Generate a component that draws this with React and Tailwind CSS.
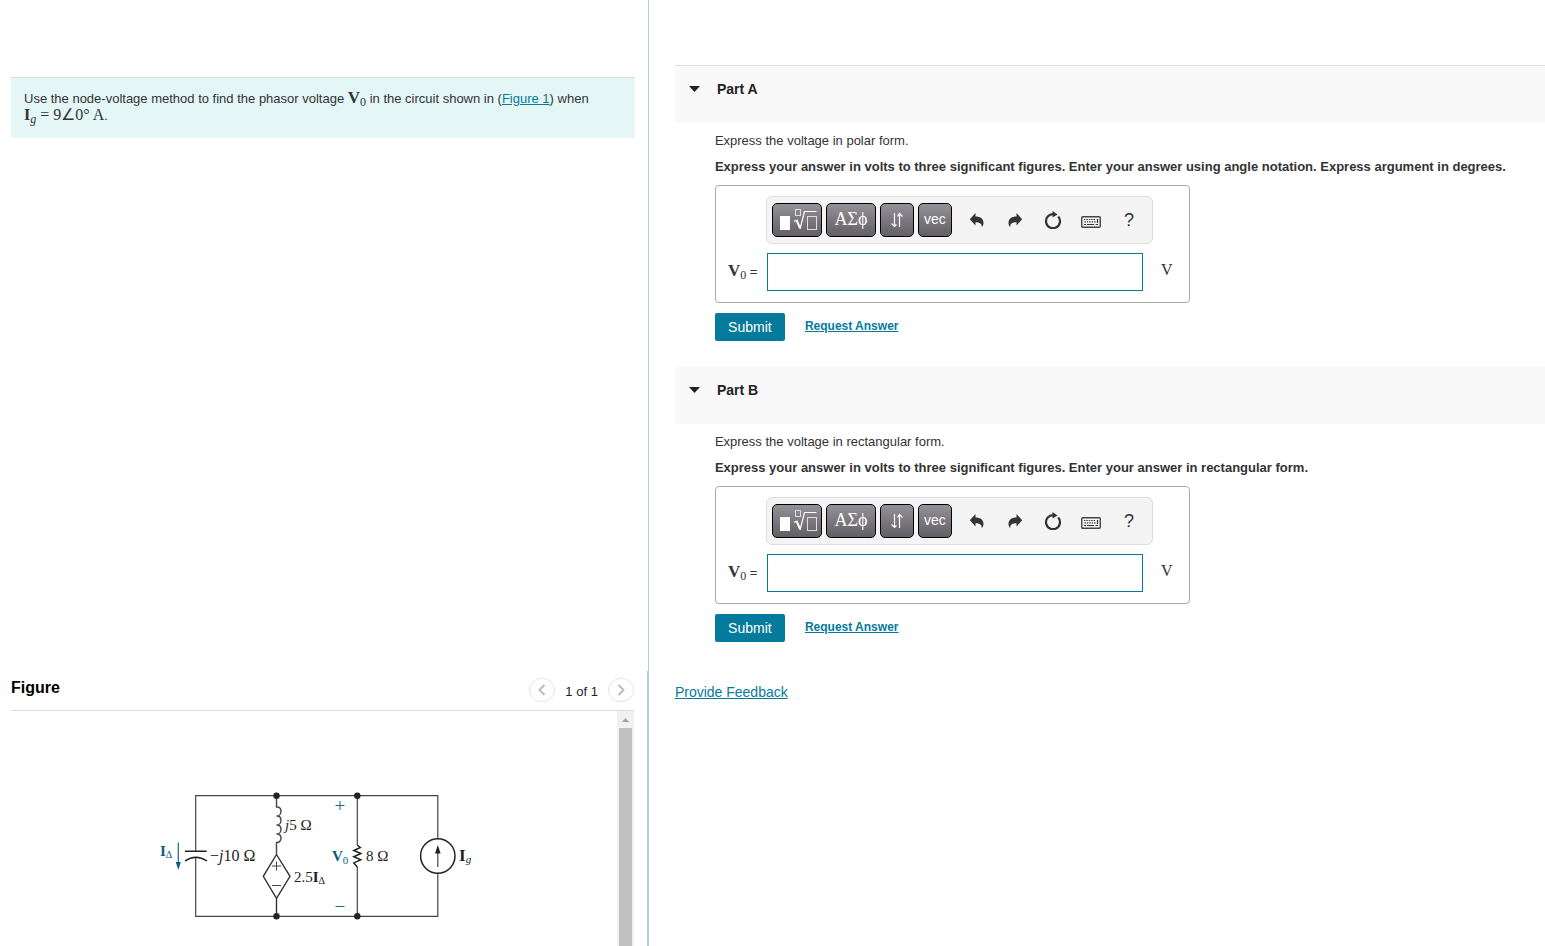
import React from "react";

const parts = [
  {
    id: "a",
    title: "Part A",
    prompt: "Express the voltage in polar form.",
    hint: "Express your answer in volts to three significant figures. Enter your answer using angle notation. Express argument in degrees.",
  },
  {
    id: "b",
    title: "Part B",
    prompt: "Express the voltage in rectangular form.",
    hint: "Express your answer in volts to three significant figures. Enter your answer in rectangular form.",
  },
];

const KEY_CLASS =
  "flex h-[34px] shrink-0 items-center justify-center rounded-[5px] border border-black bg-linear-to-b from-[#949198] to-[#626065] text-white";

const V0 = () => (
  <span className="font-['Liberation_Serif',serif] leading-none">
    <b className="text-[17px] leading-none">V</b>
    <sub className="bottom-[-3px] text-xs leading-none">0</sub>
  </span>
);

const TemplateIcon = () => (
  <svg width="40" height="24" viewBox="0 0 40 24" fill="none" stroke="#fff" aria-hidden="true">
    <rect x="3" y="8" width="10" height="14" fill="#fff" stroke="none" />
    <path d="M17 13.500l2.500-1.500" strokeWidth="1.200" />
    <path d="M19.500 12l3.500 8" strokeWidth="2" />
    <path d="M23 21l4.500-17.500h12" strokeWidth="1.200" />
    <rect x="18.500" y="1.500" width="5" height="6" stroke="#ddd" />
    <rect x="30.500" y="8.500" width="9" height="13" stroke="#ddd" />
  </svg>
);

const UndoIcon = () => (
  <svg width="16" height="16" viewBox="0 0 16 16" fill="#333" aria-hidden="true">
    <path d="M6.500 1v3.500c4.500 0 8 2 8 6.500 0 1.700-.6 3-1.800 4.300.3-3.600-1.700-5-6.200-5v3.200L.8 7.300z" />
  </svg>
);

const RedoIcon = () => (
  <svg width="16" height="16" viewBox="0 0 16 16" fill="#333" aria-hidden="true">
    <path d="M9.500 1v3.500c-4.500 0-8 2-8 6.500 0 1.700.6 3 1.800 4.300-.3-3.600 1.700-5 6.200-5v3.200L15.200 7.300z" />
  </svg>
);

const ResetIcon = () => (
  <svg width="18" height="18" viewBox="0 0 18 18" fill="none" aria-hidden="true">
    <path d="M9.500 3.200A7 7 0 1 0 14.200 5.500" stroke="#333" strokeWidth="2.200" />
    <path d="M8.500 0l5 3.400-5 3.200z" fill="#333" />
  </svg>
);

const KeyboardIcon = () => (
  <svg width="20" height="12" viewBox="0 0 20 12" fill="none" stroke="#333" aria-hidden="true">
    <rect x=".75" y=".75" width="18.500" height="10.500" rx="1" strokeWidth="1.400" stroke="#444" />
    <path d="M3 3.500h12M3.500 5.800h11" strokeWidth="1.200" strokeDasharray="1.400 1" />
    <path d="M3 8.500h2M6 8.500h7M14.500 8.500h2.500M16.500 3v4" strokeWidth="1.200" />
  </svg>
);

const Toolbar = () => (
  <div className="flex h-12 w-[387px] items-center rounded-md border border-[#dddddd] bg-[#f4f4f4] pl-[5px]">
    <div className="flex gap-1">
      <button type="button" aria-label="Templates" className={`${KEY_CLASS} w-[50px]`}>
        <TemplateIcon />
      </button>
      <button
        type="button"
        className={`${KEY_CLASS} w-[50px] pb-0.5 font-['Liberation_Serif',serif] text-lg leading-5`}
      >
        ΑΣϕ
      </button>
      <button type="button" aria-label="Arrows" className={`${KEY_CLASS} w-[34px]`}>
        <svg width="14" height="16" viewBox="0 0 14 16" fill="none" stroke="#fff" aria-hidden="true">
          <path d="M4.500 1v13M1.500 11.500l3 3 2-2M9.500 15V2M7.500 4.500l2-3 3 3" strokeWidth="1.200" />
        </svg>
      </button>
      <button type="button" className={`${KEY_CLASS} w-[34px] pb-0.5 text-sm`}>
        vec
      </button>
    </div>
    <div className="ml-1.5 flex">
      <button type="button" aria-label="Undo" className="flex h-8 w-[38px] items-center justify-center">
        <UndoIcon />
      </button>
      <button type="button" aria-label="Redo" className="flex h-8 w-[38px] items-center justify-center">
        <RedoIcon />
      </button>
      <button type="button" aria-label="Reset" className="flex h-8 w-[38px] items-center justify-center">
        <ResetIcon />
      </button>
      <button type="button" aria-label="Keyboard shortcuts" className="flex h-8 w-[38px] items-center justify-center pt-1">
        <KeyboardIcon />
      </button>
      <button type="button" aria-label="Help" className="flex h-8 w-[38px] items-center justify-center text-lg text-[#333]">
        ?
      </button>
    </div>
  </div>
);

const Part = ({ part }) => (
  <section className="mb-[26px]">
    <header className="flex h-[57px] items-start bg-[#f9f9f9] pt-[13px]">
      <button type="button" className="flex items-center pl-[14px] text-sm leading-5 font-bold text-[#222]">
        <svg width="11" height="6" viewBox="0 0 11 6" className="mr-[17px]" aria-hidden="true">
          <path d="M0 0h11L5.500 6z" fill="#222" />
        </svg>
        {part.title}
      </button>
    </header>
    <div className="pt-2 pl-10 text-[13px] leading-5 text-[#333]">
      <p>{part.prompt}</p>
      <p className="mt-1.5 font-bold">{part.hint}</p>
      <div className="mt-2 w-[475px] rounded border border-[#aaaaaa] pt-2.5 pb-[11px]">
        <div className="pl-[50px]">
          <Toolbar />
        </div>
        <div className="mt-[9px] flex items-center">
          <label htmlFor={`answer-${part.id}`} className="w-[51px] shrink-0 pl-3 whitespace-nowrap">
            <V0 /> =
          </label>
          <input
            id={`answer-${part.id}`}
            type="text"
            className="h-[38px] w-[376px] border border-[#047a9c] bg-white px-2 outline-none"
          />
          <span className="ml-[18px] pb-1 font-['Liberation_Serif',serif] text-base">V</span>
        </div>
      </div>
      <div className="mt-2.5 flex items-center">
        <button type="button" className="h-7 w-[70px] rounded-xs bg-[#047a9c] text-sm text-white">
          Submit
        </button>
        <a href="#answer" className="ml-5 pb-0.5 text-xs font-bold text-[#047a9c] underline">
          Request Answer
        </a>
      </div>
    </div>
  </section>
);

const Circuit = () => (
  <svg
    width="330"
    height="150"
    viewBox="150 780 330 150"
    fill="none"
    stroke="#444"
    strokeWidth="1.200"
    fontFamily="'Liberation Serif', serif"
    fontSize="15"
    role="img"
    aria-label="Circuit diagram"
  >
    <path d="M195.700 851V795.700H437.800V839M437.800 873V916.300H195.700V857.500" />
    <path d="M185 851.300H206.700M185 861Q195.700 853.500 207 861" strokeWidth="1.500" stroke="#222" />
    <path
      d="M276.500 796V807c6-1 6 9 0 9 6-1 6 9 0 9 6-1 6 9 0 9 6-1 6 9 0 8.500V854"
      strokeWidth="1.400"
    />
    <path d="M276.500 854.500L290 876.300L276.500 898.300L263.300 876.300zM276.500 898V916" strokeWidth="1.400" stroke="#333" />
    <path d="M272 866h9M276.500 861.500v9M272 885.500h9" strokeWidth="1" />
    <path d="M357.300 796V845M357.300 867V916" />
    <path
      d="M357.300 845l3 2.500-6.500 3 7 3-7 3.200 7 3-7 3.200 3.500 4.100"
      strokeWidth="1.500"
      stroke="#222"
    />
    <circle cx="437.800" cy="856" r="17.200" strokeWidth="1.500" stroke="#222" />
    <path d="M437.800 867V850" />
    <path d="M435 853.500h5.600L437.800 845z" fill="#222" stroke="none" />
    <g fill="#222" stroke="none">
      <circle cx="276.500" cy="795.700" r="3.200" />
      <circle cx="357.300" cy="795.700" r="3.200" />
      <circle cx="276.500" cy="916.300" r="3.200" />
      <circle cx="357.300" cy="916.300" r="3.200" />
    </g>
    <g stroke="#1a6690">
      <path d="M335.500 805.500h9M340 801v9M335.500 906.500h9" strokeWidth="1" />
      <path d="M178.300 842.500V863" />
      <path d="M175.800 862h5L178.300 870z" fill="#0b5a85" stroke="none" />
    </g>
    <g fill="#0b5a85" stroke="none">
      <text x="160" y="856">
        <tspan fontWeight="bold">I</tspan>
        <tspan dy="2" fontSize="10">Δ</tspan>
      </text>
      <text x="332" y="861">
        <tspan fontWeight="bold">V</tspan>
        <tspan dy="3" fontSize="11">0</tspan>
      </text>
    </g>
    <g fill="#222" stroke="none">
      <text x="210" y="861" fontSize="16">
        −<tspan fontStyle="italic">j</tspan>10 Ω
      </text>
      <text x="285" y="830">
        <tspan fontStyle="italic">j</tspan>5 Ω
      </text>
      <text x="294" y="882">
        2.5<tspan fontWeight="bold">I</tspan>
        <tspan dy="2" fontSize="10">Δ</tspan>
      </text>
      <text x="366" y="861">8 Ω</text>
      <text x="459" y="861">
        <tspan fontWeight="bold" fontSize="17">I</tspan>
        <tspan dy="2" fontSize="11" fontStyle="italic">g</tspan>
      </text>
    </g>
  </svg>
);

const PagerButton = ({ label, d }) => (
  <button
    type="button"
    aria-label={label}
    className="flex h-6 w-[26px] items-center justify-center rounded-full border border-[#e5e5e5]"
  >
    <svg width="8" height="12" viewBox="0 0 8 12" fill="none" stroke="#bbb" strokeWidth="2" aria-hidden="true">
      <path d={d} />
    </svg>
  </button>
);

const FigurePanel = () => (
  <section className="flex h-[275px] flex-col border-r-2 border-[#b9cbdb] pr-[13px] pl-[11px]">
    <div className="flex h-10 items-center justify-between border-b border-[#dddddd]">
      <h2 className="pb-1.5 text-base font-bold text-black">Figure</h2>
      <div className="flex items-center gap-2.5 pb-0.5 text-[13px] text-[#222]">
        <PagerButton label="Previous" d="M6.500 1L1.500 6l5 5" />
        <span className="pt-1">1 of 1</span>
        <PagerButton label="Next" d="M1.500 1l5 5-5 5" />
      </div>
    </div>
    <div className="flex min-h-0 flex-1">
      <div className="flex-1 overflow-hidden pt-[69px] pl-[139px]">
        <Circuit />
      </div>
      <div className="flex w-[17px] flex-col items-center bg-[#f1f1f1]">
        <div className="flex h-[17px] items-center">
          <svg width="7" height="4" viewBox="0 0 7 4" aria-hidden="true">
            <path d="M0 4h7L3.500 0z" fill="#a0a0a0" />
          </svg>
        </div>
        <div className="w-[13px] flex-1 bg-[#c1c1c1]" />
      </div>
    </div>
  </section>
);

const App = () => {
  return (
    <div className="flex h-screen overflow-hidden bg-white font-['Liberation_Sans',Arial,sans-serif]">
      <aside className="flex w-[42%] shrink-0 flex-col">
        <div className="flex-1 border-r border-[#b9cbdb] pt-[77px] pr-[13px] pl-[11px]">
          <div className="border-t border-[#dddddd] bg-[#e5f6f7] pt-[11px] pr-3 pb-3.5 pl-[13px] text-[13px] leading-4 text-[#333]">
            <p>
              Use the node-voltage method to find the phasor voltage <V0 /> in the circuit shown in (
              <a href="#figure" className="text-[#047a9c] underline">
                Figure 1
              </a>
              ) when
            </p>
            <p>
              <span className="font-['Liberation_Serif',serif] text-base leading-none">
                <b>I</b>
                <sub className="bottom-[-3px] text-xs leading-none italic">g</sub> = 9∠0° A
              </span>
              .
            </p>
          </div>
        </div>
        <FigurePanel />
      </aside>
      <main className="min-w-0 flex-1 overflow-hidden pt-[65px] pl-[26px]">
        <div className="border-t border-[#dddddd]">
          {parts.map((part) => (
            <Part key={part.id} part={part} />
          ))}
        </div>
        <a href="#feedback" className="mt-3.5 inline-block text-sm text-[#047a9c] underline">
          Provide Feedback
        </a>
      </main>
    </div>
  );
};

export default App;
